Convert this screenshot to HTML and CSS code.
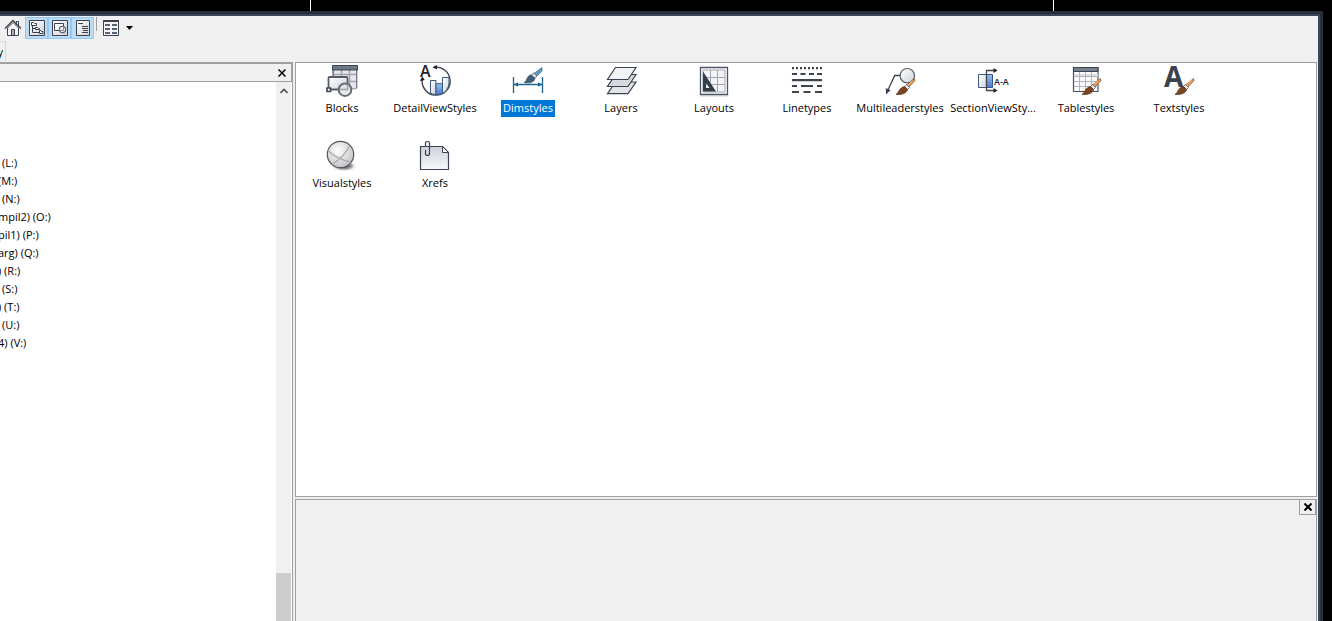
FILE: index.html
```
<!DOCTYPE html>
<html lang="en">
<head>
    <meta charset="UTF-8">
    <meta name="viewport" content="width=device-width, initial-scale=1.0">
    <title>DesignCenter</title>
    <link rel="stylesheet" href="styles.css">
</head>
<body>
    <!-- shared gradients and the brush -->
    <svg class="defs" width="0" height="0" aria-hidden="true">
        <defs>
            <linearGradient id="paper" x1="0" y1="0" x2="1" y2="1">
                <stop offset="0" stop-color="#ffffff"/>
                <stop offset="1" stop-color="#cfd3da"/>
            </linearGradient>
            <linearGradient id="sheet" x1="0" y1="0" x2="0" y2="1">
                <stop offset="0" stop-color="#cdd1d9"/>
                <stop offset="1" stop-color="#f7f8fa"/>
            </linearGradient>
            <linearGradient id="blue" x1="0" y1="0" x2="0" y2="1">
                <stop offset="0" stop-color="#9dc0ee"/>
                <stop offset="1" stop-color="#4a7cc4"/>
            </linearGradient>
            <radialGradient id="ball" cx="0.4" cy="0.35" r="0.65">
                <stop offset="0" stop-color="#ffffff"/>
                <stop offset="1" stop-color="#c4c5c8"/>
            </radialGradient>
            <radialGradient id="shade">
                <stop offset="0" stop-color="#333333"/>
                <stop offset="0.600" stop-color="#777777" stop-opacity="0.700"/>
                <stop offset="1" stop-color="#ffffff" stop-opacity="0"/>
            </radialGradient>
            <g id="brush">
                <path d="M30.500 13.500L31 15.500L24 23L21.500 21Z" fill="#e2853a" stroke="#8a5a34" stroke-width="0.700"/>
                <path d="M29 15.500L23.500 21" stroke="#ffd9a8" stroke-width="1"/>
                <path d="M22.500 19.500L25.500 22.500L23.500 24.500L20.500 21.500Z" fill="#e8e8ea" stroke="#4a4a50" stroke-width="0.700"/>
                <path d="M20.500 21.500L23.500 24.500C23 28 18 30 12 29.500C15 28 15 22.500 20.500 21.500Z" fill="#7a4520" stroke="#4d2a12" stroke-width="0.700"/>
            </g>
        </defs>
    </svg>

    <div class="canvas">
        <span></span>
        <span class="tick"></span>
        <span class="tick"></span>
    </div>

    <div class="window">
        <header>
            <div class="toolbar">
                <button class="tool" type="button" aria-label="Home">
                    <svg width="18" height="18" viewBox="0 0 18 18" fill="none" stroke="#3b4350">
                        <path d="M3.500 9V16.500H14.500V9L9 3.500Z" fill="#f6f6f7"/>
                        <path d="M12.500 5V2.500H14.500V7" fill="#fff"/>
                        <path d="M1 9.500L9 1.500L17 9.500" stroke-width="1.300"/>
                        <path d="M7.500 16.500V10.500H10.500V16.500Z" fill="#a9adb3"/>
                    </svg>
                </button>
                <div class="toggles">
                    <button class="tool on" type="button" aria-label="Tree view" aria-pressed="true">
                        <svg width="16" height="16" viewBox="0 0 16 16" fill="none" stroke="#3b4350">
                            <path d="M0.500 0.500H15.500V15.500H0.500Z" fill="url(#paper)"/>
                            <path d="M2.500 5.500V2.500H4.500L5.500 3.500H7.500V5.500ZM6.500 9.500V7.500H8.500L9.500 8.500H10.500V9.500ZM10.500 13.500V10.500H12L12.500 11.500H14V13.500Z" fill="#fff"/>
                            <path d="M3.500 5.500V12.500H10M3.500 8.500H6.500"/>
                        </svg>
                    </button>
                    <button class="tool on" type="button" aria-label="Preview" aria-pressed="true">
                        <svg width="16" height="16" viewBox="0 0 16 16" fill="none" stroke="#3b4350">
                            <path d="M0.500 0.500H15.500V15.500H0.500Z" fill="url(#paper)"/>
                            <path d="M2.500 3.500H11.500V10.500H2.500Z" fill="#fff"/>
                            <circle cx="10.500" cy="9.500" r="3.300" fill="#dde1e7" fill-opacity="0.800"/>
                            <path d="M7.500 10.500H11.500V6.500" stroke="#8b919b"/>
                        </svg>
                    </button>
                    <button class="tool on" type="button" aria-label="Description" aria-pressed="true">
                        <svg width="16" height="16" viewBox="0 0 16 16" fill="none" stroke="#3b4350">
                            <path d="M1.500 0.500H14.500V15.500H1.500Z" fill="url(#paper)"/>
                            <path d="M3 3.500H8M7 6.500H13M7 8.500H13M8 10.500H13M7 12.500H13"/>
                        </svg>
                    </button>
                </div>
                <span class="separator"></span>
                <button class="tool views" type="button" aria-label="Views">
                    <svg width="16" height="16" viewBox="0 0 16 16" fill="none" stroke="#3b4350">
                        <path d="M0.500 0.500H15.500V15.500H0.500Z" fill="#f4f4f5"/>
                        <path d="M0 1H16" stroke-width="2"/>
                        <path d="M2 5H7M9 5H14M2 9H7M9 9H14M2 13H7M9 13H14" stroke-width="2" stroke="#596373"/>
                    </svg>
                    <svg width="7" height="4" viewBox="0 0 7 4"><path d="M0 0H7L3.500 4Z"/></svg>
                </button>
            </div>
            <div class="tabs"><button class="tab" type="button">y</button></div>
        </header>

        <main>
            <aside>
                <div class="tree-head">
                    <button class="close" type="button" aria-label="Close folder list">
                        <svg width="8" height="8" viewBox="0 0 8 8" stroke="#000" stroke-width="1.500"><path d="M0.500 0.500L7.500 7.500M7.500 0.500L0.500 7.500"/></svg>
                    </button>
                </div>
                <div class="tree">
                    <ul class="drives">
                        <li class="gap">(L:)</li>
                        <li>(M:)</li>
                        <li class="gap">(N:)</li>
                        <li>mpil2) (O:)</li>
                        <li>pil1) (P:)</li>
                        <li>arg) (Q:)</li>
                        <li>) (R:)</li>
                        <li class="gap">(S:)</li>
                        <li>) (T:)</li>
                        <li class="gap">(U:)</li>
                        <li>4) (V:)</li>
                    </ul>
                    <div class="scrollbar">
                        <button class="scroll-up" type="button" aria-label="Scroll up">
                            <svg width="8" height="6" viewBox="0 0 8 6" fill="none" stroke="#505050" stroke-width="1.600"><path d="M0.500 5L4 1.500L7.500 5"/></svg>
                        </button>
                        <div class="thumb"></div>
                    </div>
                </div>
            </aside>

            <section class="content">
                <div class="items">
                    <button class="item" type="button">
                        <svg viewBox="0 0 32 32" fill="none">
                            <path d="M8 5.500H30V22.500H23V12H8Z" fill="#d9dbdf" fill-opacity="0.600"/>
                            <path d="M7.500 4V12M30 23.500H25M7.500 9.500H30M15.500 5V12M23.500 5V22M22 16.500H30" stroke="#a0a5ad" stroke-width="1.500"/>
                            <path d="M30.700 5V23.500M7 5V12" stroke="#6f757f" stroke-width="1.300"/>
                            <path d="M6.500 0.500H31.500V5H6.500Z" fill="#6f7886" stroke="#3b4350"/>
                            <path d="M2.500 24V13Q2.500 12 3.500 12H20.500Q21.500 12 21.500 13V24.500H4" fill="url(#paper)" stroke="#555c67" stroke-width="1.800"/>
                            <circle cx="19" cy="24.700" r="6.300" fill="#e4e4e5" fill-opacity="0.900" stroke="#686d75" stroke-width="2"/>
                            <path d="M14 24.500H21.500V19.500" stroke="#a4a8ae" stroke-width="1.500"/>
                            <path d="M1 23H4.500V26.500H1Z" fill="#fff" stroke="#3b4350" stroke-width="1.600"/>
                        </svg>
                        <span class="label">Blocks</span>
                    </button>
                    <button class="item" type="button">
                        <svg viewBox="0 0 32 32" fill="none">
                            <path d="M15 2.300A14 14 0 1 1 3.300 14" stroke="#3b4350" stroke-width="1.400"/>
                            <path d="M13.500 2.300L18 0V4.600ZM3.300 11.500L0.800 16L5.800 15Z" fill="#20252d"/>
                            <path d="M11.500 28V15.500H17V29.500Q13 29.500 11.500 28Z" fill="url(#paper)" stroke="#3d5878"/>
                            <path d="M23.500 28.500V12.500H30V19Q28.500 26 23.500 28.500Z" fill="url(#paper)" stroke="#3d5878"/>
                            <path d="M17 18.700H23.500V28.500L20 29.500H17Z" fill="url(#blue)" stroke="#31598f"/>
                            <text class="glyph" x="1" y="12" font-size="16">A</text>
                        </svg>
                        <span class="label">DetailViewStyles</span>
                    </button>
                    <button class="item selected" type="button">
                        <svg viewBox="0 0 32 32" fill="none">
                            <path d="M1.500 12V28M30.500 12V28M2 19.500H30" stroke="#1d6490" stroke-width="1.300"/>
                            <path d="M2 19.500L6 17.200V21.800ZM30 19.500L26 17.200V21.800Z" fill="#1d6490"/>
                            <path d="M30 2.500V6L24 12L20.500 9.500Z" fill="#5b9cc0" stroke="#386a88" stroke-width="0.700"/>
                            <path d="M21.500 8L25 11L23 13.200L19 10Z" fill="#d9e3e9" stroke="#4a5e6c" stroke-width="0.700"/>
                            <path d="M19 10L23 13.500C22 17.500 18 18.500 12 17.500C15.500 16.500 14 11 19 10Z" fill="#3f5f78" stroke="#2d4557" stroke-width="0.700"/>
                        </svg>
                        <span class="label">Dimstyles</span>
                    </button>
                    <button class="item" type="button">
                        <svg viewBox="0 0 32 32" stroke="#3b4350" stroke-width="1.200">
                            <path d="M10.500 17H31L23 28.700H2.500Z" fill="#e2e4e7"/>
                            <path d="M10.500 9.500H31L23 21.500H2.500Z" fill="#d5d8dc"/>
                            <path d="M10.500 2.500H31L23 14.500H2.500Z" fill="#f2f3f5"/>
                        </svg>
                        <span class="label">Layers</span>
                    </button>
                    <button class="item" type="button">
                        <svg viewBox="0 0 32 32" fill="none">
                            <path d="M2 31H30" stroke="#d0d0d0"/>
                            <path d="M2.500 2.500H29.500V29.500H2.500Z" fill="#fff" stroke="#4b5563" stroke-width="1.300"/>
                            <path d="M5 5H27V27H5Z" fill="#f3f4f6" stroke="#a0a7b0"/>
                            <path d="M12.500 5V27M19.500 5V27M5 12.500H27M5 19.500H27" stroke="#a0a7b0"/>
                            <path d="M5 6.500V26.500H18ZM8 18V23H11.500Z" fill="#333c49" fill-rule="evenodd"/>
                        </svg>
                        <span class="label">Layouts</span>
                    </button>
                    <button class="item" type="button">
                        <svg viewBox="0 0 32 32" stroke="#3e4550" stroke-width="2">
                            <path d="M1 3H31" stroke-dasharray="2 2"/>
                            <path d="M1 9H6M9.500 9H14.500M18 9H23M26 9H31"/>
                            <path d="M1 15H31"/>
                            <path d="M1 21H6M10 21H22M26 21H31"/>
                            <path d="M1 27H8M12.500 27H19.500M24 27H31"/>
                            <path d="M1 4.500H31" stroke="#d5d5d5" stroke-width="1" stroke-dasharray="2 2"/>
                            <path d="M1 16.500H31" stroke="#d0d0d0" stroke-width="1"/>
                        </svg>
                        <span class="label">Linetypes</span>
                    </button>
                    <button class="item" type="button">
                        <svg viewBox="0 0 32 32" fill="none">
                            <path d="M16 10.500H10.700L3.500 26" stroke="#3b4350" stroke-width="1.300"/>
                            <path d="M2 29.500L1.800 23L6.500 25.200Z" fill="#3b4350"/>
                            <circle cx="23.300" cy="10.700" r="7.200" fill="url(#paper)" stroke="#555e6b" stroke-width="1.200"/>
                            <use href="#brush"/>
                        </svg>
                        <span class="label">Multileaderstyles</span>
                    </button>
                    <button class="item" type="button">
                        <svg viewBox="0 0 32 32" fill="none">
                            <path d="M1.500 9.500H9.500V22.500H1.500Z" fill="url(#paper)" stroke="#3d5878"/>
                            <path d="M9.500 9.500H15.500V22.500H9.500Z" fill="url(#blue)" stroke="#31598f"/>
                            <path d="M18 5.500H9.500V25.500H18" stroke="#3b4350" stroke-width="1.300"/>
                            <path d="M16.500 3L20.500 5.500L16.500 8ZM16.500 23L20.500 25.500L16.500 28Z" fill="#20252d"/>
                            <text class="glyph" x="17" y="20" font-size="9">A-A</text>
                        </svg>
                        <span class="label">SectionViewSty...</span>
                    </button>
                    <button class="item" type="button">
                        <svg viewBox="0 0 32 32" fill="none">
                            <path d="M3.500 2.500H28V26.500H3.500Z" fill="#fafafa" stroke="#4b5563" stroke-width="1.200"/>
                            <path d="M4 9H28V12H4Z" fill="#dcdee1"/>
                            <path d="M9.500 6V26M15.500 6V26M21.500 6V26M4 11.500H28M4 16.500H28M4 21.500H28" stroke="#b0b5bc"/>
                            <path d="M3.500 2.500H28V6.500H3.500Z" fill="#76808e" stroke="#3b4350"/>
                            <use href="#brush"/>
                        </svg>
                        <span class="label">Tablestyles</span>
                    </button>
                    <button class="item" type="button">
                        <svg viewBox="0 0 32 32" fill="none">
                            <text class="glyph big" x="1" y="22" font-size="28">A</text>
                            <use href="#brush"/>
                        </svg>
                        <span class="label">Textstyles</span>
                    </button>
                    <button class="item" type="button">
                        <svg viewBox="0 0 32 32" fill="none">
                            <ellipse cx="18" cy="26" rx="13" ry="5.500" fill="url(#shade)"/>
                            <circle cx="14.500" cy="14.500" r="13.200" fill="url(#ball)" stroke="#55585e" stroke-width="1.200"/>
                            <path d="M2 10.500Q11 19.500 25 22M23.500 5.500Q19 16 6 24.500" stroke="#a9aaad" stroke-width="1.300"/>
                        </svg>
                        <span class="label">Visualstyles</span>
                    </button>
                    <button class="item" type="button">
                        <svg viewBox="0 0 32 32" fill="none">
                            <path d="M1.500 6.500H23.500L29.500 12.500V29.500H1.500Z" fill="url(#sheet)" stroke="#3b4350" stroke-width="1.200"/>
                            <path d="M23.500 6.500V12.500H29.500Z" fill="#fff" stroke="#3b4350"/>
                            <path d="M6.500 10V13.500Q6.500 15.500 8.500 15.500Q10.500 15.500 10.500 13.500V3.500Q10.500 1.500 8.500 1.500Q6.500 1.500 6.500 3.500V6" stroke="#3b4350" stroke-width="1.200"/>
                        </svg>
                        <span class="label">Xrefs</span>
                    </button>
                </div>

                <div class="preview">
                    <button class="close boxed" type="button" aria-label="Close preview">
                        <svg width="8" height="8" viewBox="0 0 8 8" stroke="#000" stroke-width="2"><path d="M0.500 0.500L7.500 7.500M7.500 0.500L0.500 7.500"/></svg>
                    </button>
                </div>
            </section>
        </main>
    </div>
</body>
</html>
```
FILE: styles.css
```
* {
    box-sizing: border-box;
}

body {
    font-family: "Open Sans", "Noto Sans", sans-serif;
    font-size: 11px;
    margin: 0;
    height: 100vh;
    display: flex;
    flex-direction: column;
    background-color: #000;
    color: #000;
    overflow: hidden;
}

button {
    font: inherit;
    color: inherit;
    background: none;
    border: none;
    padding: 0;
    margin: 0;
}

svg {
    display: block;
    flex: none;
}

.defs {
    position: absolute;
}

/* strip of the drawing above the window */
.canvas {
    display: grid;
    grid-template-columns: 310px 743px 1fr;
    height: 11px;
    flex: none;
}

.tick {
    border-left: 1px solid #fff;
}

.window {
    flex: 1;
    min-height: 0;
    display: flex;
    flex-direction: column;
    margin: 3px 12px 0 0;
    border: 2px solid #3a4657;
    border-left: none;
    border-bottom: none;
    box-shadow: 0 0 0 3px #272e3b;
    background-color: #f0f0f0;
}

.toolbar {
    display: flex;
    height: 24px;
    padding: 1px 0 1px 4px;
}

.tool {
    display: flex;
    align-items: center;
    justify-content: center;
}

.toggles {
    display: flex;
    margin: 0 2px 0 3px;
}

.on {
    width: 23px;
    background-color: #bddcf4;
    border: 1px solid #90c8f6;
}

.separator {
    width: 1px;
    height: 14px;
    background-color: #a0a0a0;
}

.views {
    gap: 7px;
    margin-left: 6px;
}

.tabs {
    height: 22px;
    padding-top: 1px;
}

.tab {
    width: 6px;
    height: 20px;
    border: 1px solid #d9d9d9;
    border-left: none;
    border-bottom: none;
    display: flex;
    align-items: center;
    justify-content: flex-end;
    padding-right: 2px;
}

main {
    flex: 1;
    min-height: 0;
    display: flex;
    gap: 2px;
    padding-right: 1px;
}

aside {
    width: 293px;
    flex: none;
    display: flex;
    flex-direction: column;
    border-top: 2px solid #a0a0a0;
    border-right: 1px solid #a0a0a0;
}

.tree-head {
    height: 18px;
    flex: none;
    display: flex;
    justify-content: flex-end;
    border: 1px solid #a0a0a0;
    border-width: 0 1px 1px 0;
}

.close {
    display: flex;
    align-items: center;
    justify-content: center;
    width: 18px;
}

.tree {
    flex: 1;
    min-height: 0;
    display: flex;
    background-color: #fff;
}

.drives {
    flex: 1;
    list-style: none;
    margin: 0 0 0 -2px;
    padding: 72px 0 0;
    line-height: 18px;
    white-space: nowrap;
}

.gap {
    padding-left: 4px;
}

.scrollbar {
    width: 16px;
    display: flex;
    flex-direction: column;
    justify-content: space-between;
    background-color: #f0f0f0;
    border-right: 1px solid #fff;
}

.scroll-up {
    height: 17px;
    display: flex;
    align-items: center;
    justify-content: center;
}

.thumb {
    height: 48px;
    background-color: #cdcdcd;
}

.content {
    flex: 1;
    min-width: 0;
    display: flex;
    flex-direction: column;
    gap: 2px;
}

.items {
    flex: 1;
    display: grid;
    grid-template-columns: repeat(auto-fill, 93px);
    grid-auto-rows: 75px;
    padding-top: 2px;
    border: 1px solid #a0a0a0;
    background-color: #fff;
}

.item {
    display: flex;
    flex-direction: column;
    align-items: center;
    gap: 3px;
    padding-right: 1px;
    white-space: nowrap;
}

.item svg {
    width: 32px;
    height: 32px;
    overflow: visible;
}

.label {
    padding: 0 2px 1px;
    line-height: 16px;
}

.selected .label {
    background-color: #0078d7;
    color: #fff;
}

.glyph {
    font-family: "Open Sans", sans-serif;
    font-weight: 600;
    fill: #20252d;
}

.big {
    font-weight: 700;
    fill: #3b4350;
}

.preview {
    height: 122px;
    flex: none;
    display: flex;
    justify-content: flex-end;
    align-items: flex-start;
    border: 1px solid #a0a0a0;
    border-bottom: none;
}

.boxed {
    width: 17px;
    height: 15px;
    border: 1px solid #a0a0a0;
    border-top: none;
}
```
